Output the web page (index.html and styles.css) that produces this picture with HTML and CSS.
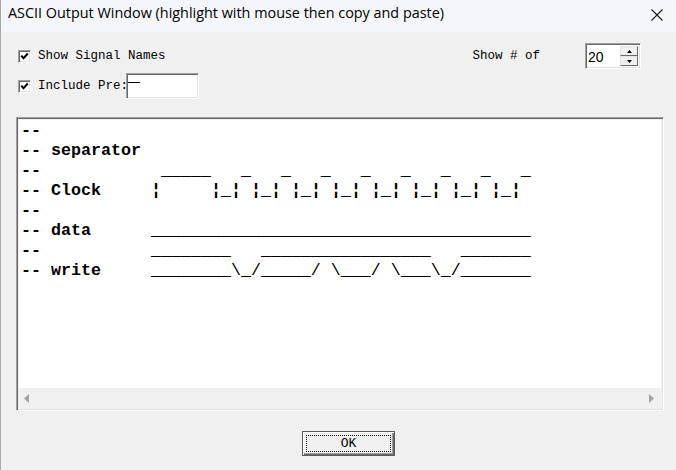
FILE: index.html
```html
<!DOCTYPE html>
<html>
<head>
<meta charset="utf-8">
<link rel="stylesheet" href="styles.css">
</head>
<body>
<div class="window">
  <div class="titlebar">
    <span class="title">ASCII Output Window (highlight with mouse then copy and paste)</span>
    <svg class="close" width="12" height="12" viewBox="0 0 12 12"><path d="M0.5 0.5 L11.5 11.5 M11.5 0.5 L0.5 11.5" stroke="#1a1a1a" stroke-width="1.1" fill="none"/></svg>
  </div>
  <div class="body">
    <div class="controls">
      <div class="opts">
        <div class="opt">
          <span class="chk"><svg width="9" height="9" viewBox="0 0 9 9"><path d="M1.3 3.6 L3.5 6.2 L7.8 1.5" stroke="#000" stroke-width="2" fill="none"/></svg></span>
          <span class="lbl">Show Signal Names</span>
        </div>
        <div class="opt">
          <span class="chk"><svg width="9" height="9" viewBox="0 0 9 9"><path d="M1.3 3.6 L3.5 6.2 L7.8 1.5" stroke="#000" stroke-width="2" fill="none"/></svg></span>
          <span class="lbl">Include Pre:</span>
          <span class="field">—</span>
        </div>
      </div>
      <div class="count">
        <span class="lbl">Show # of</span>
        <div class="spin">
          <span class="val">20</span>
          <div class="btns">
            <span class="sbtn"><svg width="5" height="3" viewBox="0 0 5 3"><path d="M2.5 0 L5 3 L0 3 Z" fill="#000"/></svg></span>
            <span class="sbtn"><svg width="5" height="3" viewBox="0 0 5 3"><path d="M0 0 L5 0 L2.5 3 Z" fill="#000"/></svg></span>
          </div>
        </div>
      </div>
    </div>
    <div class="output">
<pre class="text">--
-- separator
--<span class="w">            _____   _   _   _   _   _   _   _   _</span>
-- Clock<span class="w">     <b>¦</b>     <b>¦</b>_<b>¦</b> <b>¦</b>_<b>¦</b> <b>¦</b>_<b>¦</b> <b>¦</b>_<b>¦</b> <b>¦</b>_<b>¦</b> <b>¦</b>_<b>¦</b> <b>¦</b>_<b>¦</b> <b>¦</b>_<b>¦</b> </span>
--
-- data<span class="w">      ______________________________________</span>
--<span class="w">           ________   _________________   _______</span>
-- write<span class="w">     ________\_/_____/ \___/ \___\_/_______</span></pre>
      <div class="hscroll">
        <svg width="6" height="9" viewBox="0 0 6 9"><path d="M6 0 L6 9 L1 4.5 Z" fill="#a3a3a3"/></svg>
        <svg width="6" height="9" viewBox="0 0 6 9"><path d="M0 0 L0 9 L5 4.5 Z" fill="#a3a3a3"/></svg>
      </div>
    </div>
    <div class="footer">
      <button class="ok"><span class="focus">OK</span></button>
    </div>
  </div>
</div>
</body>
</html>
```

FILE: styles.css
```css
html, body {
  margin: 0;
  padding: 0;
  background: #f0f0f0;
}

.window {
  width: 676px;
  height: 470px;
  box-sizing: border-box;
  border-left: 1px solid #a8a8a8;
  background: #f0f0f0;
  overflow: hidden;
}

.titlebar {
  height: 32px;
  box-sizing: border-box;
  background: #f4f6f9;
  display: flex;
  align-items: flex-start;
  padding-top: 4px;
  padding-left: 7px;
}

.title {
  font-family: "Open Sans", "Noto Sans", sans-serif;
  font-size: 14.4px;
  line-height: 18px;
  color: #000;
  white-space: nowrap;
}

.close {
  margin-left: auto;
  margin-right: 13px;
  margin-top: 5px;
}

.body {
  padding: 11px 0 0 15px;
}

.controls {
  display: flex;
  align-items: flex-start;
  padding-left: 2px;
}

.opts {
  display: flex;
  flex-direction: column;
  gap: 4px;
}

.opt {
  height: 26px;
  display: flex;
  align-items: center;
}

.lbl {
  font-family: "Liberation Mono", monospace;
  font-size: 12.5px;
  color: #000;
  white-space: pre;
}

.chk {
  width: 13px;
  height: 13px;
  box-sizing: border-box;
  background: #fff;
  border-style: solid;
  border-width: 1px;
  border-color: #a0a0a0 #fff #fff #a0a0a0;
  box-shadow: inset 1px 1px #696969, inset -1px -1px #e3e3e3;
  margin-right: 7px;
  display: flex;
  align-items: center;
  justify-content: center;
}

.field {
  width: 73px;
  height: 26px;
  box-sizing: border-box;
  background: #fff;
  border-style: solid;
  border-width: 1px;
  border-color: #a0a0a0 #fff #fff #a0a0a0;
  box-shadow: inset 1px 1px #696969, inset -1px -1px #e3e3e3;
  font-family: "Liberation Sans", sans-serif;
  font-size: 12px;
  line-height: 14px;
  padding: 1px 0 0 1px;
  margin-left: -2px;
}

.count {
  margin-left: auto;
  margin-right: 35px;
  display: flex;
  align-items: center;
  gap: 45px;
}

.spin {
  width: 56px;
  height: 26px;
  box-sizing: border-box;
  background: #fff;
  border-style: solid;
  border-width: 1px;
  border-color: #a0a0a0 #fff #fff #a0a0a0;
  box-shadow: inset 1px 1px #696969, inset -1px -1px #e3e3e3;
  display: flex;
  padding: 2px 2px 2px 2px;
}

.val {
  font-family: "Liberation Sans", sans-serif;
  font-size: 14px;
  line-height: 22px;
  flex: 1;
}

.btns {
  width: 18px;
  display: flex;
  flex-direction: column;
}

.sbtn {
  flex: 1;
  background: #f0f0f0;
  box-sizing: border-box;
  border-style: solid;
  border-width: 1px;
  border-color: #e3e3e3 #696969 #696969 #e3e3e3;
  display: flex;
  align-items: center;
  justify-content: center;
}

.output {
  margin-top: 18px;
  width: 648px;
  height: 294px;
  box-sizing: border-box;
  border-style: solid;
  border-width: 1px;
  border-color: #a0a0a0 #fff #fff #a0a0a0;
  box-shadow: inset 1px 1px #696969, inset -1px -1px #e3e3e3;
  padding: 2px;
  display: flex;
  flex-direction: column;
}

.text {
  flex: 1;
  margin: 0;
  padding: 1px 0 0 2px;
  background: #fff;
  font-family: "Liberation Mono", monospace;
  font-weight: bold;
  font-size: 16.667px;
  line-height: 20px;
  color: #000;
  overflow: hidden;
}

.text .w {
  font-weight: normal;
}

.text .w b {
  font-weight: bold;
}

.hscroll {
  height: 20px;
  background: #f0f0f0;
  display: flex;
  align-items: center;
  justify-content: space-between;
  padding: 0 6px 0 4px;
}

.footer {
  margin-top: 20px;
  padding-left: 286px;
}

.ok {
  width: 93px;
  height: 25px;
  box-sizing: border-box;
  margin: 0;
  padding: 3px;
  background: #f0f0f0;
  border: 1px solid #5a5a5a;
  box-shadow: inset 1px 1px #fff, inset -1px -1px #696969, inset -2px -2px #a0a0a0;
  display: flex;
}

.focus {
  flex: 1;
  border: 1px dotted #000;
  font-family: "Liberation Mono", monospace;
  font-size: 13px;
  line-height: 15px;
  color: #000;
  text-align: center;
}
```
